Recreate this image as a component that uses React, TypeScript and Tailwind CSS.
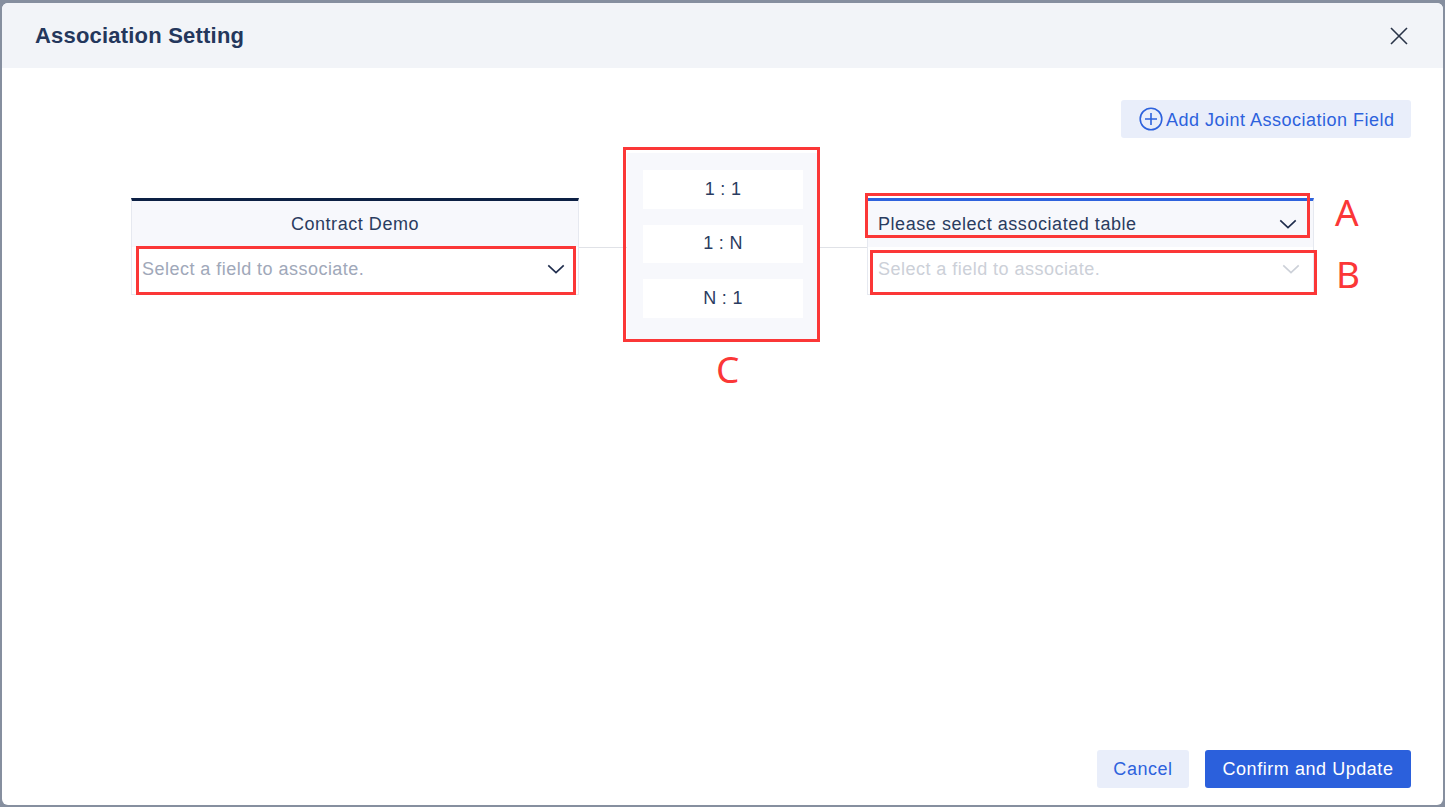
import React from 'react';

const font = { fontFamily: '"Liberation Sans", Arial, sans-serif' };

function Chevron({ className }: { className?: string }) {
  return (
    <svg viewBox="0 0 20 11" className={className} fill="none" stroke="currentColor" strokeWidth="1.8">
      <path d="M1.5 1.5 L10 9.5 L18.5 1.5" />
    </svg>
  );
}

function Mark({ className }: { className: string }) {
  return <div className={`absolute border-[3px] border-[#fb3737] ${className}`} />;
}

function Letter({ className, children }: { className: string; children: React.ReactNode }) {
  return (
    <span
      className={`absolute text-[37px] leading-[44px] text-[#fb3737] ${className}`}
      style={{ fontFamily: '"Noto Sans", sans-serif' }}
    >
      {children}
    </span>
  );
}

function FieldRow({ disabled }: { disabled?: boolean }) {
  return (
    <div className="flex h-[47px] items-start justify-between pl-[10px] pr-[12px] pt-[10px]">
      <span className={`text-[18px] leading-[24px] tracking-[0.47px] ${disabled ? 'text-[#ccd0d8]' : 'text-[#a0a8b9]'}`}>
        Select a field to associate.
      </span>
      <Chevron className={`mt-[7px] h-[10px] w-[20px] ${disabled ? 'text-[#ccd0d8]' : 'text-[#1f2d4d]'}`} />
    </div>
  );
}

export default function App() {
  return (
    <div className="relative h-[807px] w-[1445px] overflow-hidden bg-[#868f9f] pb-[2px] pl-[2px] pr-[2px] pt-[3px]" style={font}>
      <div className="relative flex h-full flex-col overflow-hidden rounded-[6px] bg-white">
        {/* Header */}
        <div className="flex h-[65px] shrink-0 items-center justify-between bg-[#f2f4f8] pl-[33px] pr-[35px]">
          <span className="text-[22px] font-bold tracking-[0.2px] text-[#24375c]">Association Setting</span>
          <svg viewBox="0 0 18 18" className="h-[18px] w-[18px] text-[#2a3448]" fill="none" stroke="currentColor" strokeWidth="1.6">
            <path d="M1 1 L17 17 M17 1 L1 17" />
          </svg>
        </div>

        {/* Body */}
        <div className="flex flex-1 flex-col">
          <div className="flex justify-end pr-[32px] pt-[32px]">
            <button className="flex h-[38px] w-[290px] items-center gap-[3px] rounded-[3px] bg-[#e9eefa] pl-[18px] text-[18px] tracking-[0.5px] text-[#2d62dd]">
              <svg viewBox="0 0 24 24" className="h-[24px] w-[24px]" fill="none" stroke="currentColor" strokeWidth="1.6">
                <circle cx="12" cy="12" r="10.8" />
                <path d="M12 6 V18 M6 12 H18" />
              </svg>
              <span className="pt-[2px]">Add Joint Association Field</span>
            </button>
          </div>

          <div className="mt-[12px] flex items-start pl-[129px]">
            {/* Source table */}
            <div className="mt-[48px] w-[448px] border-x border-b border-t-[3px] border-x-[#e6e9f0] border-b-[#e6e9f0] border-t-[#0c2044]">
              <div className="flex h-[46px] items-center justify-center bg-[#f7f8fc] text-[18px] tracking-[0.55px] text-[#2a3c60]">Contract Demo</div>
              <FieldRow />
            </div>

            <div className="mt-[97px] h-px w-[48px] bg-[#e0e2e7]" />

            {/* Relation types */}
            <div className="mt-[3px] flex h-[186px] w-[191px] flex-col gap-[16px] bg-[#f7f8fc] pl-[16px] pr-[15px] pt-[17px]">
              {['1 : 1', '1 : N', 'N : 1'].map((label) => (
                <div key={label} className="flex h-[38.5px] items-center justify-center bg-white text-[18px] tracking-[0.3px] text-[#2a3c60]">
                  {label}
                </div>
              ))}
            </div>

            <div className="mt-[97px] h-px w-[49px] bg-[#e0e2e7]" />

            {/* Target table */}
            <div className="mt-[48px] w-[447px] border-x border-b border-t-[3px] border-x-[#e6e9f0] border-b-[#e6e9f0] border-t-[#2d62dd]">
              <div className="flex h-[46px] items-center justify-between bg-[#f7f8fc] pl-[10px] pr-[15px] text-[18px] tracking-[0.55px] text-[#2a3c60]">
                Please select associated table
                <Chevron className="h-[10px] w-[20px] text-[#1f2d4d]" />
              </div>
              <FieldRow disabled />
            </div>
          </div>

          {/* Footer */}
          <div className="mt-auto flex justify-end gap-[16px] pb-[17px] pr-[32px]">
            <button className="h-[38px] w-[92px] rounded-[3px] bg-[#e9eefa] text-[18px] tracking-[0.55px] text-[#2d62dd]">Cancel</button>
            <button className="h-[38px] w-[206px] rounded-[3px] bg-[#2b60dc] text-[18px] tracking-[0.55px] text-white">Confirm and Update</button>
          </div>
        </div>
      </div>

      {/* Annotations over the screenshot */}
      <Mark className="left-[136px] top-[246px] h-[49px] w-[440px]" />
      <Mark className="left-[623px] top-[147px] h-[195px] w-[197px]" />
      <Mark className="left-[865px] top-[193px] h-[45px] w-[445px]" />
      <Mark className="left-[870px] top-[250px] h-[45px] w-[447px]" />
      <Letter className="left-[1335px] top-[190px]">A</Letter>
      <Letter className="left-[1336px] top-[252px]">B</Letter>
      <Letter className="left-[716px] top-[347px]">C</Letter>
    </div>
  );
}
